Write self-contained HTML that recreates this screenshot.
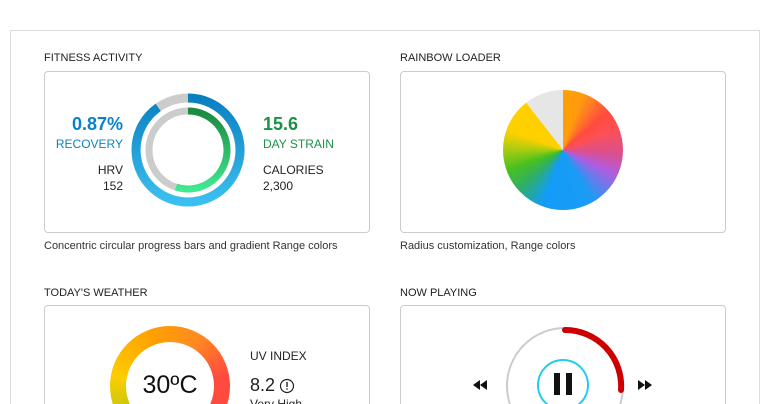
<!DOCTYPE html>
<html style="width:770px;height:404px;overflow:hidden"><head><meta charset="utf-8"><style>
*{margin:0;padding:0;box-sizing:border-box}
body{width:770px;height:404px;overflow:hidden;background:#fff;font-family:"Liberation Sans",sans-serif;color:#222;position:relative}
.outer{position:absolute;left:10px;top:30px;width:750px;height:374px;border:1px solid #ddd;border-bottom:none}
.t{position:absolute;font-size:11px;color:#222}
.card{position:absolute;border:1px solid #ccc;border-radius:4px;background:#fff}
.cap{position:absolute;font-size:11px;color:#333}
.a{position:absolute;white-space:nowrap}
.clip{position:absolute;overflow:hidden}
</style></head><body>
<div class="outer"></div>
<div class="t" style="left:44px;top:52px">FITNESS ACTIVITY</div>
<div class="t" style="left:400px;top:52px">RAINBOW LOADER</div>
<div class="card" style="left:44px;top:71px;width:326px;height:162px"></div>
<div class="card" style="left:400px;top:71px;width:326px;height:162px"></div>
<div class="cap" style="left:44px;top:240px">Concentric circular progress bars and gradient Range colors</div>
<div class="cap" style="left:400px;top:240px">Radius customization, Range colors</div>

<svg class="a" style="left:0;top:0" width="770" height="240">
<defs>
<linearGradient id="bl" x1="0" y1="0" x2="0" y2="1"><stop offset="0" stop-color="#0a7fc0"/><stop offset="1" stop-color="#3ac0f0"/></linearGradient>
<linearGradient id="gr" x1="0" y1="0" x2="0" y2="1"><stop offset="0" stop-color="#1a8a40"/><stop offset="1" stop-color="#40e890"/></linearGradient>
</defs>
<circle cx="188" cy="150" r="52" fill="none" stroke="#ccc" stroke-width="9"/>
<path d="M188 98 A52 52 0 1 1 158.2 107.4" fill="none" stroke="url(#bl)" stroke-width="9"/>
<circle cx="188" cy="150" r="39" fill="none" stroke="#ccc" stroke-width="7"/>
<path d="M188 111 A39 39 0 1 1 176 187.1" fill="none" stroke="url(#gr)" stroke-width="7"/>
</svg>

<div class="a" style="left:40px;top:114px;width:83px;text-align:right;font-size:18px;font-weight:bold;color:#0a82c8">0.87%</div>
<div class="a" style="left:40px;top:137px;width:83px;text-align:right;font-size:12px;color:#0a82c8">RECOVERY</div>
<div class="a" style="left:40px;top:163px;width:83px;text-align:right;font-size:12px">HRV</div>
<div class="a" style="left:40px;top:179px;width:83px;text-align:right;font-size:12px">152</div>
<div class="a" style="left:263px;top:114px;font-size:18px;font-weight:bold;color:#1a9048">15.6</div>
<div class="a" style="left:263px;top:137px;font-size:12px;color:#1a9048">DAY STRAIN</div>
<div class="a" style="left:263px;top:163px;font-size:12px">CALORIES</div>
<div class="a" style="left:263px;top:179px;font-size:12px">2,300</div>

<div class="a" style="left:503px;top:90px;width:120px;height:120px;border-radius:50%;background:conic-gradient(#ffa000 0deg,#ff9a10 20deg,#ff4a40 50deg,#ff5050 65deg,#d85090 95deg,#b05ce0 115deg,#1a9cf5 150deg,#129cf8 200deg,#30b060 230deg,#48c020 250deg,#a8cc10 270deg,#ffd000 290deg,#ffd000 322deg,#e6e6e6 322deg,#e6e6e6 360deg)"></div>

<div class="t" style="left:44px;top:287px">TODAY'S WEATHER</div>
<div class="t" style="left:400px;top:287px">NOW PLAYING</div>
<div class="card" style="left:44px;top:305px;width:326px;height:99px;border-bottom:none;border-radius:4px 4px 0 0"></div>
<div class="card" style="left:400px;top:305px;width:326px;height:99px;border-bottom:none;border-radius:4px 4px 0 0"></div>
<svg class="a" style="left:0;top:0" width="770" height="404">
<circle cx="565" cy="386" r="58" fill="none" stroke="#ccc" stroke-width="2"/>
<path d="M565 330 A56 56 0 0 1 621 390" fill="none" stroke="#cc0000" stroke-width="6" stroke-linecap="round"/>
<circle cx="563" cy="385" r="25" fill="none" stroke="#22ccee" stroke-width="2"/>
<rect x="554" y="373" width="6" height="22" fill="#111"/><rect x="566" y="373" width="6" height="22" fill="#111"/>
<path d="M473 385 L480 380 L480 390Z M480 385 L487 380 L487 390Z" fill="#111"/>
<path d="M638 380 L645 385 L638 390Z M645 380 L652 385 L645 390Z" fill="#111"/>
</svg>
<div class="clip" style="left:100px;top:320px;width:140px;height:84px">
<div class="a" style="left:10px;top:6px;width:120px;height:120px;border-radius:50%;background:conic-gradient(from -20deg,#ffa000 0deg,#ff8a20 50deg,#ff4a40 100deg,#ff4a40 180deg,#6cc010 230deg,#c0c810 260deg,#ffcc00 300deg,#ffa000 360deg)"></div>
<div class="a" style="left:26px;top:22px;width:88px;height:88px;border-radius:50%;background:#fff"></div>
<div class="a" style="left:26px;top:51px;width:88px;text-align:center;font-size:25px;color:#111">30ºC</div>
</div>
<div class="a" style="left:250px;top:349px;font-size:12px">UV INDEX</div>
<div class="a" style="left:250px;top:375px;font-size:18px">8.2</div>
<svg class="a" style="left:278px;top:377px" width="18" height="18"><circle cx="9" cy="9" r="6.5" fill="none" stroke="#222" stroke-width="1.2"/><rect x="8.3" y="5" width="1.4" height="5" fill="#222"/><rect x="8.3" y="11.3" width="1.4" height="1.4" fill="#222"/></svg>
<div class="clip" style="left:250px;top:396px;width:80px;height:8px"><div class="a" style="left:0;top:1px;font-size:12px">Very High</div></div>
</body></html>
